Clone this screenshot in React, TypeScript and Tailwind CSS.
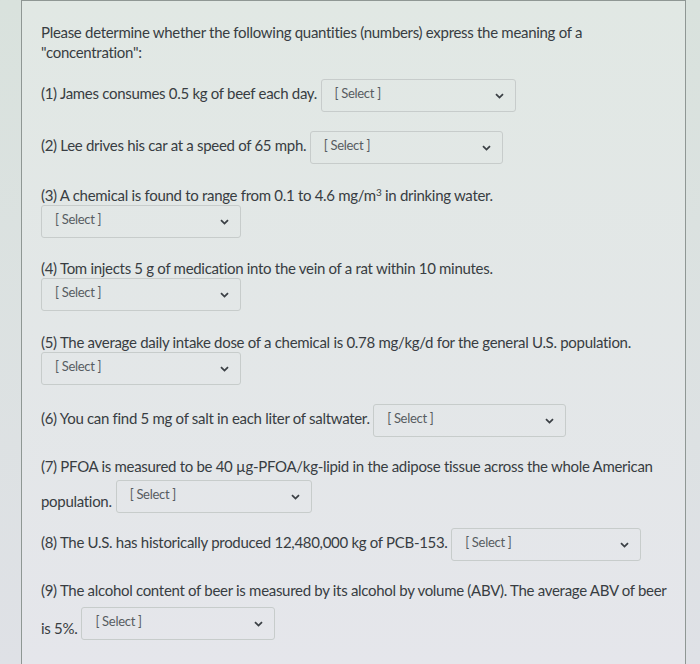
import { ReactNode } from 'react'

function Dropdown({ className = 'w-[195px]' }: { className?: string }) {
  return (
    <span
      className={`inline-flex h-[33px] shrink-0 items-center justify-between rounded-[3px] border border-[#c7cccb] pl-[13px] pr-[11px] align-middle text-[13px] leading-none text-[#575c61] ${className}`}
    >
      <span className="-mt-1">[ Select ]</span>
      <svg width="9" height="6" viewBox="0 0 9 6" className="text-[#3b4045]">
        <path d="M1 1.2 4.5 4.6 8 1.2" fill="none" stroke="currentColor" strokeWidth="1.8" />
      </svg>
    </span>
  )
}

function Question({ children, className = 'mb-[19px]' }: { children: ReactNode; className?: string }) {
  return <div className={`leading-[20px] ${className}`}>{children}</div>
}

// second line of a wrapped question: tail of the sentence + dropdown
function TailRow({ text, className, dropdown }: { text: string; className: string; dropdown: string }) {
  return (
    <div className={`flex items-end gap-[4px] ${className}`}>
      <span className="mb-[2px]">{text}</span>
      <Dropdown className={dropdown} />
    </div>
  )
}

export default function App() {
  return (
    <div className="min-h-[664px] bg-linear-to-b from-[#d9e2dd] to-[#dfe1e6] pl-[21px] pr-[14px] font-['Lato','Open_Sans',sans-serif]">
      <div className="min-h-[664px] border-x border-t border-[#8f9794] bg-linear-to-b from-[#e1e8e4] to-[#e5e6eb] pl-[19px] pr-2 pt-[21px] text-[15px] tracking-[-0.3px] text-[#383d42]">
        <p className="mb-[17px] leading-[20px]">
          Please determine whether the following quantities (numbers) express the meaning of a
          <br />
          "concentration":
        </p>

        <Question>
          (1) James consumes 0.5 kg of beef each day. <Dropdown />
        </Question>

        <Question className="mb-[21px]">
          (2) Lee drives his car at a speed of 65 mph. <Dropdown className="w-[193px]" />
        </Question>

        <Question className="mb-[20px]">
          (3) A chemical is found to range from 0.1 to 4.6 mg/m<sup className="text-[10px]">3</sup> in drinking water.
          <br />
          <Dropdown className="w-[200px]" />
        </Question>

        <Question className="mb-[21px]">
          (4) Tom injects 5 g of medication into the vein of a rat within 10 minutes.
          <br />
          <Dropdown className="w-[200px]" />
        </Question>

        <Question>
          (5) The average daily intake dose of a chemical is 0.78 mg/kg/d for the general U.S. population.
          <br />
          <Dropdown className="w-[200px]" />
        </Question>

        <Question>
          (6) You can find 5 mg of salt in each liter of saltwater. <Dropdown className="w-[193px]" />
        </Question>

        <Question className="mb-[15px]">
          <div className="whitespace-nowrap">
            (7) PFOA is measured to be 40 µg-PFOA/kg-lipid in the adipose tissue across the whole American
          </div>
          <TailRow text="population." className="mt-[4px]" dropdown="w-[196px]" />
        </Question>

        <Question>
          (8) The U.S. has historically produced 12,480,000 kg of PCB-153. <Dropdown className="w-[190px]" />
        </Question>

        <Question>
          <div className="whitespace-nowrap">
            (9) The alcohol content of beer is measured by its alcohol by volume (ABV). The average ABV of beer
          </div>
          <TailRow text="is 5%." className="mt-[7px]" dropdown="w-[194px]" />
        </Question>
      </div>
    </div>
  )
}
